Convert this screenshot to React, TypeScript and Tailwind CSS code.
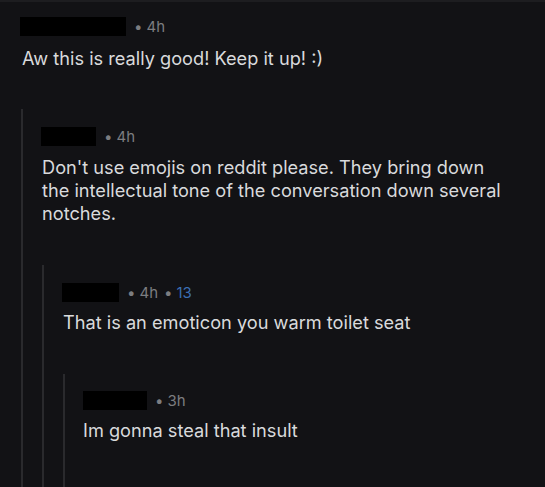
const META = "text-[#7c7d80]";

type Meta = { box: string; time: string; score?: string };

const Header = ({ box, time, score }: Meta) => (
  <div className="flex items-center h-[20px] text-[15px] leading-none">
    <div className={`bg-black h-[19px] ${box}`} />
    <span className={`${META} ml-[8px]`}>•</span>
    <span className={`${META} ml-[4px]`}>{time}</span>
    {score && (
      <>
        <span className={`${META} ml-[6px]`}>•</span>
        <span className="text-[#3b6fb3] ml-[4px]">{score}</span>
      </>
    )}
  </div>
);

export default function App() {
  return (
    <div
      className="w-[545px] h-[487px] overflow-hidden bg-[#121215] text-[#d9dadc] border-t-2 border-[#1d1d20]"
      style={{ fontFamily: "Inter, 'Liberation Sans', sans-serif" }}
    >
      {/* top level comment */}
      <div className="pl-[20px] pt-[14px]">
        <Header box="w-[106px]" time="4h" />
        <p className="mt-[11px] ml-[2px] text-[18.2px] leading-[23px]">
          Aw this is really good! Keep it up! :)
        </p>
      </div>

      {/* reply */}
      <div className="ml-[21px] mt-[39px] border-l-2 border-[#2a2a2d] pl-[18px] pt-[17px] pb-[400px]">
        <Header box="w-[55px]" time="4h" />
        <p className="mt-[10px] ml-[1px] text-[18.2px] leading-[23px] pr-[38px]">
          Don't use emojis on reddit please. They bring down the intellectual tone of the conversation down several notches.
        </p>

        {/* reply to reply */}
        <div className="ml-[1px] mt-[40px] border-l-2 border-[#2a2a2d] pl-[18px] pt-[17px] pb-[300px]">
          <Header box="w-[57px]" time="4h" score="13" />
          <p className="mt-[9px] ml-[1px] text-[18.2px] leading-[23px]">
            That is an emoticon you warm toilet seat
          </p>

          <div className="ml-[1px] mt-[40px] border-l-2 border-[#2a2a2d] pl-[18px] pt-[16px] pb-[200px]">
            <Header box="w-[64px]" time="3h" />
            <p className="mt-[9px] text-[18.2px] leading-[23px]">
              Im gonna steal that insult
            </p>
          </div>
        </div>
      </div>
    </div>
  );
}
